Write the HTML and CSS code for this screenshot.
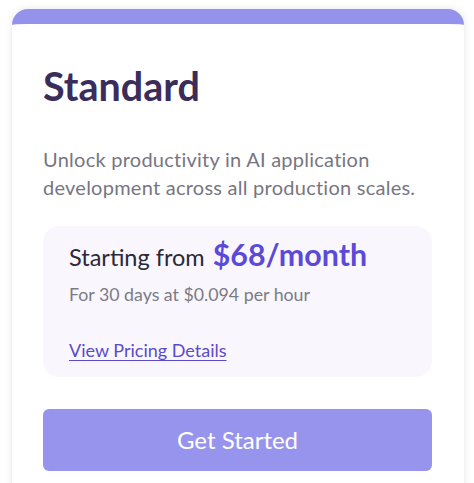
FILE: index.html
```html
<!DOCTYPE html>
<html lang="en">
<head>
<meta charset="utf-8">
<title>Standard plan</title>
<link rel="stylesheet" href="styles.css">
</head>
<body>
<div class="page">
  <section class="card">
    <h1 class="title">Standard</h1>
    <p class="desc">Unlock productivity in AI application development across all production scales.</p>
    <div class="pricebox">
      <div class="price-row">
        <span class="price-label">Starting from</span>
        <span class="price">$68/month</span>
      </div>
      <div class="price-sub">For 30 days at $0.094 per hour</div>
      <a class="price-link" href="#">View Pricing Details</a>
    </div>
    <button class="cta" type="button">Get Started</button>
  </section>
</div>
</body>
</html>
```
FILE: styles.css
```css
* { box-sizing: border-box; }
html, body {
  margin: 0;
  padding: 0;
  background: #ffffff;
  font-family: Lato, "Noto Sans", sans-serif;
}
.page {
  padding: 9px 10px 0 12px;
  height: 483px;
  overflow: hidden;
}
.card {
  width: 452px;
  min-height: 500px;
  background: #ffffff;
  border-top: 15px solid #9592ec;
  border-radius: 16px 16px 0 0;
  box-shadow: 0 0 7px rgba(70, 70, 110, 0.14);
  padding: 38px 32px 0 31px;
  display: flex;
  flex-direction: column;
}
.title {
  margin: 0;
  font-size: 39.5px;
  line-height: 1.2;
  font-weight: 700;
  color: #3a2d5c;
}
.desc {
  margin: 36px 0 0;
  font-size: 20px;
  letter-spacing: 0.25px;
  line-height: 28px;
  color: #767681;
}
.pricebox {
  margin-top: 24.5px;
  background: #f9f7fd;
  border-radius: 16px;
  padding: 10.5px 20px 12.5px 26px;
  display: flex;
  flex-direction: column;
  align-items: flex-start;
}
.price-row {
  display: flex;
  align-items: baseline;
  gap: 8px;
}
.price-label {
  font-size: 23.5px;
  line-height: 1.2;
  color: #2b2839;
}
.price {
  font-size: 30.4px;
  line-height: 1.2;
  font-weight: 700;
  color: #5b4ad9;
}
.price-sub {
  margin-top: 9.5px;
  font-size: 17.75px;
  line-height: 25px;
  color: #7b7b86;
}
.price-link {
  margin-top: 30px;
  font-size: 18px;
  line-height: 1.5;
  color: #5a4bc9;
  text-decoration: underline;
  text-underline-offset: 3px;
  text-decoration-thickness: 1px;
}
.cta {
  margin-top: 32px;
  height: 62px;
  width: 100%;
  border: none;
  border-radius: 6px;
  background: #9794ed;
  color: #ffffff;
  font-family: Lato, "Noto Sans", sans-serif;
  font-size: 24px;
  display: flex;
  align-items: center;
  justify-content: center;
  padding: 0;
}
```
